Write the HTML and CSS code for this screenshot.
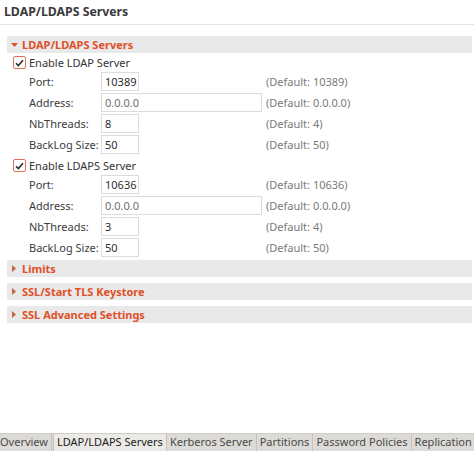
FILE: index.html
```html
<!DOCTYPE html>
<html>
<head>
<meta charset="utf-8">
<link rel="stylesheet" href="styles.css">
</head>
<body>
<div class="window">
  <div class="page-title">LDAP/LDAPS Servers</div>
  <div class="content">
    <div class="section">
      <div class="section-header">
        <svg class="twisty-down" width="7" height="4" viewBox="0 0 7 4"><path d="M0 0 L7 0 L3.5 4 Z" fill="#df5028"/></svg>
        <span>LDAP/LDAPS Servers</span>
      </div>
      <div class="section-body">
        <div class="check-row">
          <span class="checkbox"><svg width="9" height="8" viewBox="0 0 9 8"><path d="M1 4.2 L3.4 6.6 L8 1.2" fill="none" stroke="#2b2b2b" stroke-width="1.6"/></svg></span>
          <span>Enable LDAP Server</span>
        </div>
        <div class="field"><span class="label">Port:</span><span class="input short">10389</span><span class="default">(Default: 10389)</span></div>
        <div class="field"><span class="label">Address:</span><span class="input long muted">0.0.0.0</span><span class="default">(Default: 0.0.0.0)</span></div>
        <div class="field"><span class="label">NbThreads:</span><span class="input short">8</span><span class="default">(Default: 4)</span></div>
        <div class="field"><span class="label">BackLog Size:</span><span class="input short">50</span><span class="default">(Default: 50)</span></div>
        <div class="check-row">
          <span class="checkbox"><svg width="9" height="8" viewBox="0 0 9 8"><path d="M1 4.2 L3.4 6.6 L8 1.2" fill="none" stroke="#2b2b2b" stroke-width="1.6"/></svg></span>
          <span>Enable LDAPS Server</span>
        </div>
        <div class="field"><span class="label">Port:</span><span class="input short">10636</span><span class="default">(Default: 10636)</span></div>
        <div class="field"><span class="label">Address:</span><span class="input long muted">0.0.0.0</span><span class="default">(Default: 0.0.0.0)</span></div>
        <div class="field"><span class="label">NbThreads:</span><span class="input short">3</span><span class="default">(Default: 4)</span></div>
        <div class="field"><span class="label">BackLog Size:</span><span class="input short">50</span><span class="default">(Default: 50)</span></div>
      </div>
    </div>
    <div class="section collapsed">
      <div class="section-header">
        <svg class="twisty-right" width="4" height="7" viewBox="0 0 4 7"><path d="M0 0 L4 3.5 L0 7 Z" fill="#c8643c"/></svg>
        <span>Limits</span>
      </div>
    </div>
    <div class="section collapsed">
      <div class="section-header">
        <svg class="twisty-right" width="4" height="7" viewBox="0 0 4 7"><path d="M0 0 L4 3.5 L0 7 Z" fill="#c8643c"/></svg>
        <span>SSL/Start TLS Keystore</span>
      </div>
    </div>
    <div class="section collapsed">
      <div class="section-header">
        <svg class="twisty-right" width="4" height="7" viewBox="0 0 4 7"><path d="M0 0 L4 3.5 L0 7 Z" fill="#c8643c"/></svg>
        <span>SSL Advanced Settings</span>
      </div>
    </div>
  </div>
  <div class="tabbar">
    <span class="tab first">Overview</span>
    <span class="tab active">LDAP/LDAPS Servers</span>
    <span class="tab">Kerberos Server</span>
    <span class="tab">Partitions</span>
    <span class="tab">Password Policies</span>
    <span class="tab">Replication</span>
  </div>
</div>
</body>
</html>
```

FILE: styles.css
```css
html, body {
  margin: 0;
  padding: 0;
  background: #ffffff;
}

body {
  font-family: "Noto Sans", "Open Sans", "DejaVu Sans", sans-serif;
  font-size: 11px;
  color: #3c3c3c;
}

.window {
  display: flex;
  flex-direction: column;
  height: 451px;
  width: 474px;
  overflow: hidden;
}

.page-title {
  height: 25px;
  line-height: 23px;
  padding: 0 4px;
  font-size: 12.3px;
  font-weight: bold;
  color: #3a3a3a;
  border-bottom: 1px solid #e4e4e4;
  box-sizing: border-box;
}

.content {
  padding: 11px 2px 0 7px;
}

.section-header {
  height: 17px;
  background: #e9e9e9;
  display: flex;
  align-items: center;
  color: #df5028;
  font-weight: bold;
  font-size: 11px;
  white-space: nowrap;
}

.twisty-down {
  margin-left: 4px;
  margin-right: 4px;
}

.twisty-right {
  margin-left: 5px;
  margin-right: 6px;
}

.section.collapsed {
  margin-top: 6px;
}

.section.collapsed:nth-child(2) {
  margin-top: 3px;
}

.section-body {
  padding-left: 6px;
}

.check-row {
  height: 19px;
  display: flex;
  align-items: center;
  gap: 3px;
  color: #333333;
  white-space: nowrap;
}

.checkbox {
  width: 11px;
  height: 11px;
  border: 1px solid #e2705a;
  border-radius: 2px;
  background: #ffffff;
  display: flex;
  align-items: center;
  justify-content: center;
}

.field {
  display: grid;
  grid-template-columns: 72px 165px auto;
  align-items: center;
  height: 19px;
  margin-bottom: 2px;
  padding-left: 16px;
  white-space: nowrap;
}

.label {
  color: #3c3c3c;
}

.input {
  height: 19px;
  box-sizing: border-box;
  border: 1px solid #dcdcdc;
  background: #ffffff;
  padding-left: 3px;
  line-height: 17px;
  color: #2e2e2e;
}

.input.short {
  width: 38px;
}

.input.long {
  width: 161px;
}

.input.muted {
  color: #6e6e6e;
}

.default {
  color: #7a7a7a;
}

.tabbar {
  margin-top: auto;
  height: 17px;
  background: #dddbd7;
  border-top: 1px solid #cfcdc9;
  display: flex;
  align-items: stretch;
  white-space: nowrap;
  font-size: 11px;
}

.tab {
  padding: 0 3px;
  line-height: 16px;
  border-right: 1px solid #c4c2be;
  color: #4a4a4a;
  flex-shrink: 0;
}

.tab.first {
  margin-left: -3px;
  padding-right: 3px;
}

.tab.active {
  background: #ebeae7;
  color: #222222;
  border-left: 1px solid #c4c2be;
  margin-left: 1px;
}
```
